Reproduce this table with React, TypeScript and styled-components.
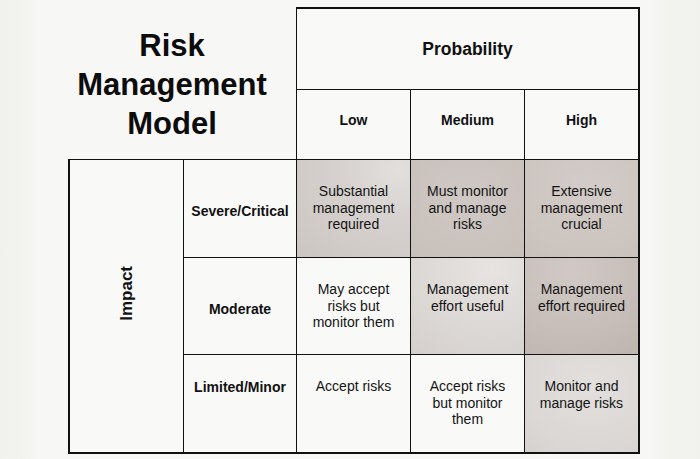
import React from "react";
import styled, { createGlobalStyle, css } from "styled-components";

const Global = createGlobalStyle`
  html, body {
    margin: 0;
    padding: 0;
  }
  body {
    width: 700px;
    height: 459px;
    overflow: hidden;
    background: linear-gradient(
      to right,
      #f1f1ed 0px,
      #f2f2ee 22px,
      #f7f7f6 40px,
      #f7f7f6 650px,
      #f2f2ee 668px,
      #f1f1ed 700px
    );
    font-family: "Liberation Sans", Arial, sans-serif;
    color: #111;
  }
`;

const LINE = "#111";

const Matrix = styled.div`
  display: grid;
  grid-template-columns: 115px 113px 114px 114px 116px;
  grid-template-rows: 82px 70px 98px 97px 100px;
  margin: 7px 0 0 68px;
  width: max-content;
`;

const Title = styled.h1`
  grid-column: span 2;
  grid-row: span 2;
  margin: 0;
  padding-right: 20px;
  padding-top: 2px;
  display: flex;
  align-items: center;
  justify-content: center;
  text-align: center;
  font-size: 31px;
  line-height: 39px;
  font-weight: 700;
  color: #0c0c0c;
`;

const ProbabilityHead = styled.div`
  grid-column: span 3;
  box-sizing: border-box;
  border-top: 2px solid ${LINE};
  border-left: 1px solid ${LINE};
  border-right: 2px solid ${LINE};
  background: #f9f9f8;
  display: flex;
  align-items: center;
  justify-content: center;
  font-size: 17.5px;
  font-weight: 700;
`;

const edges = css<{ $right?: boolean; $bottom?: boolean }>`
  box-sizing: border-box;
  border-top: 1px solid ${LINE};
  border-left: 1px solid ${LINE};
  border-right: ${(p) => (p.$right ? `2px solid ${LINE}` : "none")};
  border-bottom: ${(p) => (p.$bottom ? `2px solid ${LINE}` : "none")};
`;

const LevelHead = styled.div<{ $right?: boolean }>`
  ${edges};
  background: #f9f9f8;
  text-align: center;
  padding-top: 22px;
  font-size: 14px;
  line-height: 16.6px;
  font-weight: 700;
`;

const ImpactCol = styled.div`
  grid-row: span 3;
  box-sizing: border-box;
  border-top: 1px solid ${LINE};
  border-left: 2px solid ${LINE};
  border-bottom: 2px solid ${LINE};
  background: #f9f9f8;
  display: flex;
  align-items: center;
  justify-content: center;
  padding-bottom: 26px;
`;

const ImpactLabel = styled.span`
  writing-mode: vertical-rl;
  transform: rotate(180deg);
  font-size: 17px;
  font-weight: 700;
`;

const RowHead = styled.div<{ $bottom?: boolean; $pad: number }>`
  ${edges};
  background: #f9f9f8;
  text-align: center;
  padding-top: ${(p) => p.$pad}px;
  font-size: 14px;
  line-height: 16.6px;
  font-weight: 700;
`;

type Shade = "none" | "a" | "b" | "c" | "d" | "e" | "f";

const shades: Record<Shade, string> = {
  none: "#f9f9f8",
  a: "radial-gradient(ellipse 120% 120% at 90% 10%, #e2dfdc 0%, #d6d1ce 45%, #cdc7c3 100%)",
  b: "radial-gradient(ellipse 110% 110% at 50% 40%, #cfc8c4 0%, #c9c1bc 60%, #c3bbb6 100%)",
  c: "radial-gradient(ellipse 110% 110% at 55% 30%, #d3ccc8 0%, #cbc4bf 60%, #c5bdb8 100%)",
  d: "radial-gradient(ellipse 120% 120% at 70% 10%, #e6e3e1 0%, #dcd8d5 55%, #d3cecb 100%)",
  e: "radial-gradient(ellipse 120% 120% at 40% 15%, #d0c9c5 0%, #c6bdb8 55%, #bbb1ab 100%)",
  f: "radial-gradient(ellipse 120% 120% at 60% 30%, #e2dfdd 0%, #dbd7d4 55%, #d2cdc9 100%)",
};

const RiskCell = styled.div<{ $right?: boolean; $bottom?: boolean; $shade: Shade }>`
  ${edges};
  background: ${(p) => shades[p.$shade]};
  text-align: center;
  padding-top: 23px;
  font-size: 14px;
  line-height: 16.6px;
  font-weight: 400;
  color: #141414;
`;

type Row = {
  label: string;
  pad: number;
  cells: { lines: string[]; shade: Shade }[];
};

const rows: Row[] = [
  {
    label: "Severe/Critical",
    pad: 43,
    cells: [
      { lines: ["Substantial", "management", "required"], shade: "a" },
      { lines: ["Must monitor", "and manage", "risks"], shade: "b" },
      { lines: ["Extensive", "management", "crucial"], shade: "c" },
    ],
  },
  {
    label: "Moderate",
    pad: 43,
    cells: [
      { lines: ["May accept", "risks but", "monitor them"], shade: "none" },
      { lines: ["Management", "effort useful"], shade: "d" },
      { lines: ["Management", "effort required"], shade: "e" },
    ],
  },
  {
    label: "Limited/Minor",
    pad: 24,
    cells: [
      { lines: ["Accept risks"], shade: "none" },
      { lines: ["Accept risks", "but monitor", "them"], shade: "none" },
      { lines: ["Monitor and", "manage risks"], shade: "f" },
    ],
  },
];

const levels = ["Low", "Medium", "High"];

export default function App() {
  return (
    <>
      <Global />
      <Matrix>
        <Title>
          Risk
          <br />
          Management
          <br />
          Model
        </Title>
        <ProbabilityHead>Probability</ProbabilityHead>
        {levels.map((l, i) => (
          <LevelHead key={l} $right={i === levels.length - 1}>
            {l}
          </LevelHead>
        ))}
        <ImpactCol>
          <ImpactLabel>Impact</ImpactLabel>
        </ImpactCol>
        {rows.map((row, ri) => {
          const bottom = ri === rows.length - 1;
          return (
            <React.Fragment key={row.label}>
              <RowHead $bottom={bottom} $pad={row.pad}>
                {row.label}
              </RowHead>
              {row.cells.map((c, ci) => (
                <RiskCell
                  key={ci}
                  $shade={c.shade}
                  $right={ci === row.cells.length - 1}
                  $bottom={bottom}
                >
                  {c.lines.map((line, li) => (
                    <React.Fragment key={li}>
                      {li > 0 && <br />}
                      {line}
                    </React.Fragment>
                  ))}
                </RiskCell>
              ))}
            </React.Fragment>
          );
        })}
      </Matrix>
    </>
  );
}
